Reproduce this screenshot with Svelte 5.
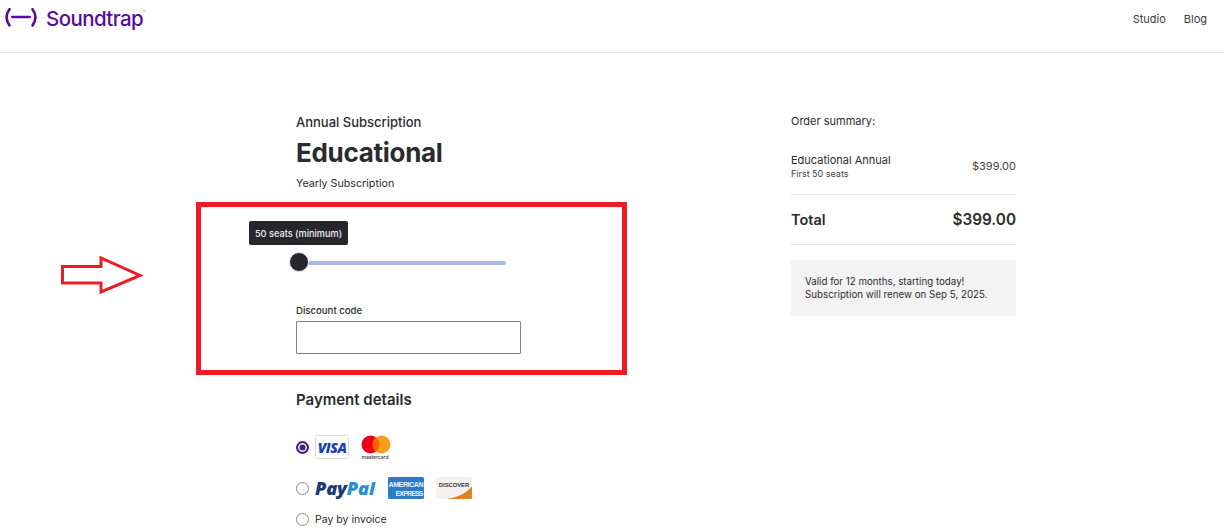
<script>
  let method = 'card';
</script>

<header class="topbar">
  <a class="logo" href="#top">
    <svg width="34" height="20" viewBox="0 0 34 20" fill="none" stroke="#5b0a9e" stroke-width="2.6" stroke-linecap="round">
      <path d="M6.5 1.3C2.6 6.5 2.6 12 6.5 17.5" />
      <path d="M29.5 1.3C33.4 6.5 33.4 12 29.5 17.5" />
      <path d="M9.3 9H26.7" />
    </svg>
    <span class="logo-name">Soundtrap</span><span class="reg">®</span>
  </a>
  <nav class="nav">
    <a href="#top">Studio</a>
    <a href="#top">Blog</a>
  </nav>
</header>

<main class="page">
  <section class="left">
    <p class="kicker">Annual Subscription</p>
    <h1>Educational</h1>
    <p class="yearly">Yearly Subscription</p>

    <div class="slider">
      <span class="tip">50 seats (minimum)</span>
      <div class="track"></div>
      <div class="thumb"></div>
    </div>

    <label class="code-label" for="code">Discount code</label>
    <input id="code" class="code" type="text" />

    <h2>Payment details</h2>

    <div class="pay-row first">
      <input class="radio" type="radio" bind:group={method} value="card" />
      <svg class="visa" width="34" height="24" viewBox="0 0 34 24">
        <rect x="0.5" y="0.5" width="33" height="23" rx="2" fill="#fff" stroke="#d8d8d8" />
        <text x="17" y="17.5" text-anchor="middle" class="visa-text">VISA</text>
      </svg>
      <svg class="mc" width="30" height="24" viewBox="0 0 30 24">
        <circle cx="9.5" cy="9.5" r="9" fill="#eb001b" />
        <circle cx="20.5" cy="9.5" r="9" fill="#f79e1b" />
        <path d="M15 2.4a9 9 0 0 1 0 14.2a9 9 0 0 1 0-14.2z" fill="#ff5f00" />
        <text x="14" y="23.5" text-anchor="middle" class="mc-text">mastercard</text>
      </svg>
    </div>

    <div class="pay-row second">
      <input class="radio" type="radio" bind:group={method} value="paypal" />
      <span class="paypal"><span class="pay">Pay</span><span class="pal">Pal</span></span>
      <svg class="amex" width="36" height="22" viewBox="0 0 36 22">
        <rect width="36" height="22" rx="1.5" fill="#2f7ac4" />
        <text x="0.5" y="10" class="amex-text" textLength="35">AMERICAN</text>
        <text x="7.5" y="18.5" class="amex-text" textLength="28">EXPRESS</text>
      </svg>
      <svg class="disc" width="36" height="22" viewBox="0 0 36 22">
        <rect width="36" height="22" rx="1.5" fill="#f3f2f0" />
        <path d="M36 9.5V20.5a1.5 1.5 0 0 1-1.5 1.5H11C22 20.5 30 16 36 9.5z" fill="#e08322" />
        <text x="18" y="9.5" text-anchor="middle" class="disc-text">DISCOVER</text>
      </svg>
    </div>

    <div class="pay-row third">
      <input class="radio" type="radio" bind:group={method} value="invoice" />
      <span class="invoice">Pay by invoice</span>
    </div>
  </section>

  <aside class="summary">
    <p class="sum-title">Order summary:</p>
    <div class="line">
      <div>
        <div class="line-name">Educational Annual</div>
        <div class="line-sub">First 50 seats</div>
      </div>
      <span class="line-price">$399.00</span>
    </div>
    <div class="total">
      <span>Total</span>
      <span class="total-price">$399.00</span>
    </div>
    <div class="note">
      Valid for 12 months, starting today!<br />
      Subscription will renew on Sep 5, 2025.
    </div>
  </aside>
</main>

<!-- annotation drawn over the screenshot -->
<div class="red-box"></div>
<svg class="red-arrow" width="84" height="40" viewBox="0 0 84 40" fill="none">
  <path d="M1.5 10.5H40V2L79 19.5L40 36V27H1.5z" stroke="#ed1c24" stroke-width="3" />
</svg>

<style>
  :global(body) {
    background: #fff;
    font-family: Inter, "Liberation Sans", sans-serif;
    color: #2b2b2e;
    overflow: hidden;
  }

  a {
    color: inherit;
    text-decoration: none;
  }

  .topbar {
    height: 52px;
    box-sizing: content-box;
    border-bottom: 1px solid #e6e6e6;
    display: flex;
    justify-content: space-between;
    align-items: flex-start;
  }

  .logo {
    display: flex;
    align-items: flex-start;
    margin-left: 3px;
    margin-top: 8px;
    color: #5b0a9e;
  }

  .logo-name {
    font-size: 20.5px;
    line-height: 22px;
    font-weight: 500;
    margin-left: 9px;
    letter-spacing: -0.6px;
  }

  .reg {
    font-size: 4px;
    line-height: 6px;
    color: #aaa;
    margin-top: 1px;
  }

  .nav {
    display: flex;
    gap: 18px;
    margin: 12px 17px 0 0;
    font-size: 11px;
    line-height: 14px;
    color: #3a3a3e;
  }

  .page {
    display: flex;
    padding: 61px 0 0 296px;
    gap: 270px;
  }

  .left {
    width: 225px;
  }

  p {
    margin: 0;
  }

  .kicker {
    font-size: 13px;
    line-height: 16px;
    font-weight: 500;
  }

  h1 {
    margin: 6px 0 0;
    font-size: 26px;
    line-height: 34px;
    font-weight: 700;
    letter-spacing: -0.3px;
  }

  .yearly {
    margin-top: 7px;
    font-size: 10.7px;
    line-height: 14px;
  }

  .slider {
    position: relative;
    height: 113px;
  }

  .tip {
    position: absolute;
    left: -47px;
    top: 30px;
    width: 99px;
    height: 24px;
    box-sizing: border-box;
    background: #26262b;
    color: #f2f2f2;
    border-radius: 2px;
    font-size: 9.2px;
    line-height: 25px;
    font-weight: 500;
    text-align: center;
    white-space: nowrap;
  }

  .track {
    position: absolute;
    left: 12px;
    top: 70px;
    width: 198px;
    height: 4px;
    border-radius: 2px;
    background: #abb5ea;
  }

  .thumb {
    position: absolute;
    left: -7px;
    top: 61px;
    width: 20px;
    height: 20px;
    box-sizing: border-box;
    border: 1px solid #e9e9e9;
    border-radius: 50%;
    background: #26262b;
  }

  .code-label {
    display: block;
    font-size: 9.6px;
    line-height: 14px;
    font-weight: 500;
  }

  .code {
    display: block;
    box-sizing: border-box;
    width: 225px;
    height: 33px;
    margin: 3px 0 0;
    border: 1px solid #828282;
    border-radius: 1px;
    background: #fff;
  }

  h2 {
    margin: 36px 0 0;
    font-size: 15px;
    line-height: 20px;
    font-weight: 600;
  }

  .pay-row {
    display: flex;
    align-items: center;
  }

  .first {
    margin-top: 25px;
    height: 24px;
  }

  .second {
    margin-top: 17px;
    height: 24px;
  }

  .third {
    margin-top: 10px;
    height: 18px;
  }

  .radio {
    appearance: none;
    width: 13px;
    height: 13px;
    margin: 0 6px 0 0;
    box-sizing: border-box;
    border: 1px solid #8a8a8a;
    border-radius: 50%;
    background: #fff;
  }

  .radio:checked {
    border: 2px solid #4d1a80;
    box-shadow: inset 0 0 0 1.5px #fff;
    background: #4d1a80;
  }

  .visa {
    display: block;
  }

  .visa-text {
    font: italic 800 14px "Open Sans", sans-serif;
    fill: #1a3fb0;
    letter-spacing: -0.5px;
  }

  .mc {
    display: block;
    margin-left: 12px;
  }

  .mc-text {
    font: 500 5px Inter, sans-serif;
    fill: #333;
  }

  .paypal {
    font: italic 800 18.3px "Open Sans", sans-serif;
    letter-spacing: -0.2px;
    line-height: 24px;
    width: 61px;
    white-space: nowrap;
  }

  .pay {
    color: #1f3a75;
  }

  .pal {
    color: #2a8fcc;
  }

  .amex {
    display: block;
    margin-left: 12px;
  }

  .amex-text {
    font: 700 7px "Liberation Sans", sans-serif;
    fill: #eaf2fb;
  }

  .disc {
    display: block;
    margin-left: 12px;
  }

  .disc-text {
    font: 700 5.8px "Liberation Sans", sans-serif;
    fill: #333;
  }

  .invoice {
    font-size: 10.5px;
    line-height: 14px;
    margin-top: 2px;
  }

  .summary {
    width: 225px;
  }

  .sum-title {
    font-size: 11px;
    line-height: 14px;
  }

  .line {
    margin-top: 25px;
    padding-bottom: 14px;
    display: flex;
    justify-content: space-between;
    align-items: center;
    border-bottom: 1px solid #e2e2e2;
  }

  .line-name {
    font-size: 11px;
    line-height: 14px;
  }

  .line-sub {
    font-size: 9px;
    line-height: 13px;
    color: #444;
  }

  .line-price {
    font-size: 11px;
    line-height: 14px;
    margin-top: -1px;
    color: #444;
  }

  .total {
    display: flex;
    justify-content: space-between;
    align-items: center;
    height: 50px;
    box-sizing: border-box;
    border-bottom: 1px solid #e2e2e2;
    font-size: 14.5px;
    font-weight: 600;
  }

  .total-price {
    font-size: 15.3px;
  }

  .note {
    margin-top: 15px;
    padding: 15px 14px;
    height: 56px;
    box-sizing: border-box;
    background: #f3f3f3;
    border-radius: 1px;
    font-size: 9.75px;
    line-height: 13px;
  }

  .red-box {
    position: absolute;
    left: 196px;
    top: 202px;
    width: 431px;
    height: 173px;
    box-sizing: border-box;
    border: 5px solid #ed1c24;
  }

  .red-arrow {
    position: absolute;
    left: 61px;
    top: 256px;
  }
</style>
